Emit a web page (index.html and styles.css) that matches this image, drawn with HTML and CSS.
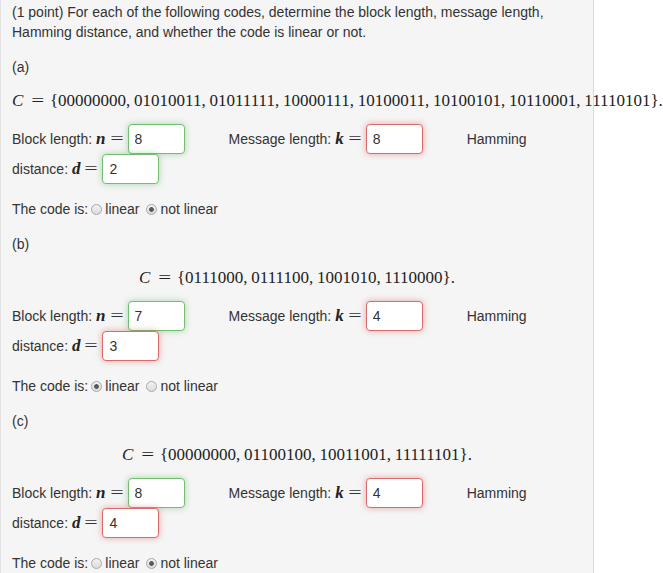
FILE: index.html
```html
<!DOCTYPE html>
<html lang="en">
<head>
<meta charset="utf-8">
<title>Codes: block length, message length, Hamming distance</title>
<link rel="stylesheet" href="styles.css">
</head>
<body>
<div class="problem">
  <p class="intro">(1 point) For each of the following codes, determine the block length, message length, Hamming distance, and whether the code is linear or not.</p>

  <section class="part">
    <p class="label">(a)</p>
    <div class="math-display"><span class="mi">C</span><span class="rel">=</span>{00000000<span class="punct">,</span>01010011<span class="punct">,</span>01011111<span class="punct">,</span>10000111<span class="punct">,</span>10100011<span class="punct">,</span>10100101<span class="punct">,</span>10110001<span class="punct">,</span>11110101}.</div>
    <div class="row"><span class="fld">Block length: <span class="var">n</span><span class="eq">=</span><input class="ans ok" type="text" value="8" readonly></span><span class="fld">Message length: <span class="var">k</span><span class="eq">=</span><input class="ans bad" type="text" value="8" readonly></span><span class="fld last">Hamming</span></div>
    <div class="row"><span class="fld">distance: <span class="var">d</span><span class="eq">=</span><input class="ans ok" type="text" value="2" readonly></span></div>
    <div class="choice">The code is:<span class="radio"></span><span class="opt">linear</span> <span class="radio on"></span><span class="opt">not linear</span></div>
  </section>

  <section class="part">
    <p class="label">(b)</p>
    <div class="math-display"><span class="mi">C</span><span class="rel">=</span>{0111000<span class="punct">,</span>0111100<span class="punct">,</span>1001010<span class="punct">,</span>1110000}.</div>
    <div class="row"><span class="fld">Block length: <span class="var">n</span><span class="eq">=</span><input class="ans ok" type="text" value="7" readonly></span><span class="fld">Message length: <span class="var">k</span><span class="eq">=</span><input class="ans bad" type="text" value="4" readonly></span><span class="fld last">Hamming</span></div>
    <div class="row"><span class="fld">distance: <span class="var">d</span><span class="eq">=</span><input class="ans bad" type="text" value="3" readonly></span></div>
    <div class="choice">The code is:<span class="radio on"></span><span class="opt">linear</span> <span class="radio"></span><span class="opt">not linear</span></div>
  </section>

  <section class="part">
    <p class="label">(c)</p>
    <div class="math-display"><span class="mi">C</span><span class="rel">=</span>{00000000<span class="punct">,</span>01100100<span class="punct">,</span>10011001<span class="punct">,</span>11111101}.</div>
    <div class="row"><span class="fld">Block length: <span class="var">n</span><span class="eq">=</span><input class="ans ok" type="text" value="8" readonly></span><span class="fld">Message length: <span class="var">k</span><span class="eq">=</span><input class="ans bad" type="text" value="4" readonly></span><span class="fld last">Hamming</span></div>
    <div class="row"><span class="fld">distance: <span class="var">d</span><span class="eq">=</span><input class="ans bad" type="text" value="4" readonly></span></div>
    <div class="choice">The code is:<span class="radio"></span><span class="opt">linear</span> <span class="radio on"></span><span class="opt">not linear</span></div>
  </section>
</div>
</body>
</html>
```

FILE: styles.css
```css
html, body {
  margin: 0;
  padding: 0;
  background: #ffffff;
}

body {
  font-family: "Liberation Sans", Arial, sans-serif;
  font-size: 14px;
  line-height: 20px;
  color: #333333;
}

.problem {
  width: 570px;
  padding: 2px 11px 12px;
  background: #f5f5f5;
  border-left: 1px solid #e3e3e3;
  border-right: 1px solid #dcdcdc;
}

.intro {
  margin: 0;
}

.part {
  margin-top: 15px;
}

.label {
  margin: 0;
}

.math-display {
  margin: 12px 0 11px;
  font-family: "Liberation Serif", "Times New Roman", serif;
  font-size: 17px;
  line-height: 24px;
  color: #222222;
  text-align: center;
  white-space: nowrap;
}

.mi {
  font-style: italic;
}

.rel {
  display: inline-block;
  margin: 0 0.45em 0 0.55em;
  transform: scaleX(1.35);
}

.punct {
  margin-right: 0.22em;
}

.row {
  white-space: nowrap;
}

.fld {
  margin-right: 44px;
}

.fld.last {
  margin-right: 0;
}

.var {
  font-family: "Liberation Serif", "Times New Roman", serif;
  font-size: 17px;
  font-style: italic;
  font-weight: bold;
  color: #222222;
}

.eq {
  display: inline-block;
  width: 12px;
  margin: 0 5px 0 5px;
  text-align: center;
  font-family: "Liberation Serif", "Times New Roman", serif;
  font-size: 17px;
  color: #333333;
  transform: scaleX(1.4);
}

.ans {
  box-sizing: border-box;
  width: 57px;
  height: 30px;
  margin: 0;
  padding: 4px 5px 4px 6px;
  font-family: "Liberation Sans", Arial, sans-serif;
  font-size: 14px;
  line-height: 20px;
  color: #333333;
  background: #ffffff;
  border: 1px solid #cccccc;
  border-radius: 4px;
  outline: none;
  vertical-align: baseline;
}

.ans.ok {
  border-color: #72bd72;
  box-shadow: 0 0 6px rgba(92, 184, 92, 0.5);
}

.ans.bad {
  border-color: #d96b6b;
  box-shadow: 0 0 6px rgba(217, 83, 79, 0.5);
}

.choice {
  margin-top: 15px;
  white-space: nowrap;
}

.radio {
  display: inline-block;
  box-sizing: border-box;
  width: 11px;
  height: 11px;
  margin: 0 3px 0 3px;
  border: 1px solid #a8a8a8;
  border-radius: 50%;
  background: linear-gradient(#f2f2f2, #dcdcdc);
  vertical-align: -1px;
}

.radio.on {
  background: radial-gradient(circle, #5a5a5a 0, #5a5a5a 2px, rgba(90, 90, 90, 0) 2.8px), linear-gradient(#f2f2f2, #dcdcdc);
}
```
